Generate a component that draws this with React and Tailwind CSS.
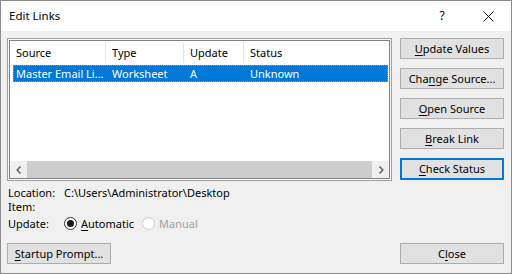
import React from "react";

const font = { fontFamily: '"Noto Sans", "Open Sans", sans-serif' };

const Btn = ({ children, focused = false, className = "" }) => (
    <div
        className={`h-[21px] flex items-center justify-center bg-[#e1e1e1] text-[11px] text-black whitespace-nowrap ${
            focused ? "border-2 border-[#0078d7]" : "border border-[#adadad]"
        } ${className}`}
    >
        {children}
    </div>
);

const U = ({ children }) => <span className="underline underline-offset-2">{children}</span>;

const Radio = ({ checked, disabled }) => (
    <span
        className={`w-[13px] h-[13px] rounded-full border flex items-center justify-center bg-white ${
            disabled ? "border-[#cccccc]" : "border-[#333333]"
        }`}
    >
        {checked && <span className="w-[7px] h-[7px] rounded-full bg-[#1a1a1a]" />}
    </span>
);

export default function App() {
    return (
        <div
            className="w-[512px] h-[274px] border border-[#8c8c8c] flex flex-col text-[11px] leading-[14px] text-black whitespace-nowrap"
            style={font}
        >
            {/* title bar */}
            <div className="h-[30px] bg-white flex items-center pl-[8px]">
                <span className="flex-1 text-[11.5px]">Edit Links</span>
                <span className="w-[46px] text-center text-[12px]">?</span>
                <span className="w-[46px] flex justify-center">
                    <svg width="11" height="11" viewBox="0 0 11 11">
                        <path d="M0.5 0.5 L10.5 10.5 M10.5 0.5 L0.5 10.5" stroke="#111" strokeWidth="1" />
                    </svg>
                </span>
            </div>

            <div className="flex-1 bg-[#f0f0f0] pl-[6px] pr-[7px] pt-[7px] flex flex-col">
                <div className="flex gap-[8px]">
                    {/* list */}
                    <div className="w-[385px] h-[143px] border border-[#a0a0a0] p-[1px] bg-[#f8f8f8]">
                        <div className="h-full border border-[#828282] bg-white flex flex-col">
                            <div className="h-[22px] pt-[2px] flex items-center">
                                <div className="w-[96px] pl-[6px] h-full flex items-center border-r border-[#e5e5e5]">Source</div>
                                <div className="w-[78px] pl-[6px] h-full flex items-center border-r border-[#e5e5e5]">Type</div>
                                <div className="w-[60px] pl-[6px] h-full flex items-center border-r border-[#e5e5e5]">Update</div>
                                <div className="flex-1 pl-[6px] h-full flex items-center">Status</div>
                            </div>
                            <div className="mt-[2px] ml-[3px] mr-[1px] h-[17px] bg-[#0078d7] text-white flex items-center outline-1 outline-dotted outline-[#6aa6e0] -outline-offset-1">
                                <div className="w-[93px] pl-[3px]">Master Email Li...</div>
                                <div className="w-[78px] pl-[6px]">Worksheet</div>
                                <div className="w-[60px] pl-[6px]">A</div>
                                <div className="flex-1 pl-[6px]">Unknown</div>
                            </div>
                            <div className="flex-1" />
                            <div className="h-[17px] bg-[#f0f0f0] flex items-center">
                                <div className="w-[17px] flex justify-center">
                                    <svg width="6" height="8" viewBox="0 0 6 8">
                                        <path d="M4.5 0.5 L1.2 4 L4.5 7.5" fill="none" stroke="#606060" strokeWidth="1.5" />
                                    </svg>
                                </div>
                                <div className="flex-1 h-full bg-[#cdcdcd]" />
                                <div className="w-[17px] flex justify-center">
                                    <svg width="6" height="8" viewBox="0 0 6 8">
                                        <path d="M1.5 0.5 L4.8 4 L1.5 7.5" fill="none" stroke="#606060" strokeWidth="1.5" />
                                    </svg>
                                </div>
                            </div>
                        </div>
                    </div>

                    {/* buttons */}
                    <div className="w-[104px] flex flex-col gap-[9px]">
                        <Btn><U>U</U>pdate Values</Btn>
                        <Btn>Cha<U>n</U>ge Source...</Btn>
                        <Btn><U>O</U>pen Source</Btn>
                        <Btn><U>B</U>reak Link</Btn>
                        <Btn focused className="h-[22px]"><U>C</U>heck Status</Btn>
                    </div>
                </div>

                {/* info */}
                <div className="mt-[5px] pl-[1px] flex flex-col">
                    <div className="h-[14px] flex">
                        <span className="w-[56px]">Location:</span>
                        <span>C:\Users\Administrator\Desktop</span>
                    </div>
                    <div className="h-[14px]">Item:</div>
                    <div className="mt-[2px] h-[15px] flex items-center">
                        <span className="w-[56px]">Update:</span>
                        <Radio checked />
                        <span className="ml-[4px]"><U>A</U>utomatic</span>
                        <span className="ml-[8px]"><Radio disabled /></span>
                        <span className="ml-[4px] text-[#a0a0a0]">Manual</span>
                    </div>
                </div>

                <div className="mt-[12px] flex justify-between">
                    <Btn className="w-[104px]"><U>S</U>tartup Prompt...</Btn>
                    <Btn className="w-[104px]">C<U>l</U>ose</Btn>
                </div>
            </div>
        </div>
    );
}
